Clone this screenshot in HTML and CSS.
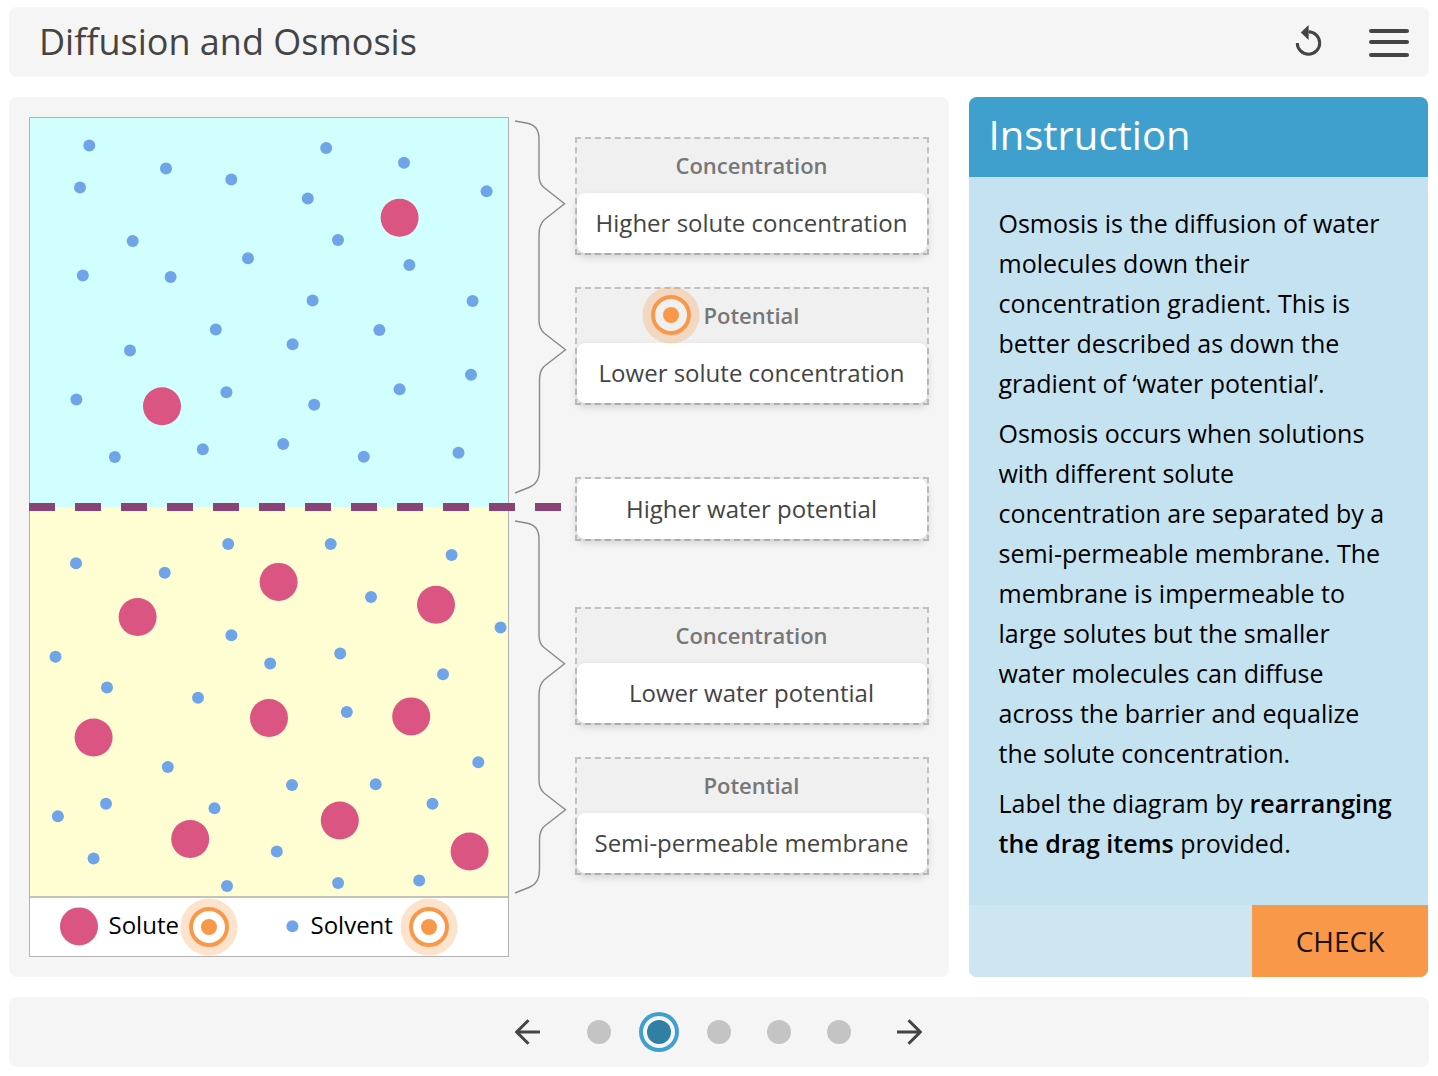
FILE: index.html
```html
<!DOCTYPE html>
<html lang="en">
<head>
    <meta charset="UTF-8">
    <meta name="viewport" content="width=device-width, initial-scale=1.0">
    <title>Diffusion and Osmosis</title>
    <link rel="stylesheet" href="styles.css">
</head>
<body>
    <header class="header">
        <h1 class="title">Diffusion and Osmosis</h1>
        <button class="icon-button reset" aria-label="Reset">
            <svg width="40" height="40" viewBox="0 0 40 40">
                <path d="M9.3 23A11.200 11.200 0 1 0 20.500 11.800" fill="none" stroke="#444" stroke-width="3"/>
                <path d="M20.600 5v15L12.800 12.400z" fill="#444"/>
            </svg>
        </button>
        <button class="icon-button menu" aria-label="Menu">
            <svg width="40" height="28" viewBox="0 0 40 28">
                <rect width="40" height="4" rx="2" fill="#444"/>
                <rect y="11" width="40" height="4" rx="2" fill="#444"/>
                <rect y="24" width="40" height="4" rx="2" fill="#444"/>
            </svg>
        </button>
    </header>

    <main class="main">
        <section class="activity">
            <svg class="diagram" width="546" height="840" viewBox="29 117 546 840">
                <rect x="29" y="117" width="480" height="390" fill="#d0fffe"/>
                <rect x="29" y="507" width="480" height="390" fill="#fffed2"/>
                <rect x="29" y="897" width="480" height="60" fill="#fff"/>
                <path d="M29 897h480" stroke="#c4c4b4" stroke-width="2"/>
                <rect x="29.5" y="117.5" width="479" height="839" fill="none" stroke="#b2b2b2"/>
                <path d="M29 507h532" stroke="#8a4374" stroke-width="8" stroke-dasharray="26 20"/>
                <g id="solvent" fill="#6fa5e8"></g>
                <g id="solute" fill="#da5581"></g>

                <g class="brace">
                    <path d="M515 121l12.500 2.200Q539 125.500 539 139V175Q539 183.500 544 187.500L564.500 203.700L544 220Q539 225 539 235V320Q539 328.500 544 333L565.500 349.700L544 366.500Q539.500 371 539.500 380V470Q539.500 483 530 487L515 493"/>
                    <path d="M515 521l12.500 2.200Q539 525.500 539 539V635Q539 643.500 544 647.500L564.500 663.700L544 680Q539 685 539 695V780Q539 788.500 544 793L565.500 809.700L544 826.500Q539.500 831 539.500 840V870Q539.500 883 530 887L515 893"/>
                </g>

                <text class="legend" x="108.500" y="934">Solute</text>
                <text class="legend" x="310.500" y="934">Solvent</text>
                <g class="hotspot-mark" transform="translate(209 927)">
                    <circle class="halo" r="28.500"/>
                    <circle r="20" fill="#fff"/>
                    <circle class="ring" r="18"/>
                    <circle class="dot" r="8"/>
                </g>
                <g class="hotspot-mark" transform="translate(429 927)">
                    <circle class="halo" r="28.500"/>
                    <circle r="20" fill="#fff"/>
                    <circle class="ring" r="18"/>
                    <circle class="dot" r="8"/>
                </g>
            </svg>

            <div class="slots">
                <div class="slot">
                    <div class="slot-title">Concentration</div>
                    <div class="drag-item">Higher solute concentration</div>
                </div>
                <div class="slot">
                    <div class="slot-title">Potential</div>
                    <div class="drag-item">Lower solute concentration</div>
                    <svg class="hotspot hotspot-mark" width="58" height="58" viewBox="-29 -29 58 58">
                        <circle class="halo" r="28.500"/>
                        <circle r="20" fill="#f0f0f0"/>
                        <circle class="ring" r="18"/>
                        <circle class="dot" r="8"/>
                    </svg>
                </div>
                <div class="slot membrane">
                    <div class="drag-item">Higher water potential</div>
                </div>
                <div class="slot">
                    <div class="slot-title">Concentration</div>
                    <div class="drag-item">Lower water potential</div>
                </div>
                <div class="slot">
                    <div class="slot-title">Potential</div>
                    <div class="drag-item">Semi-permeable membrane</div>
                </div>
            </div>
        </section>

        <aside class="instruction">
            <h2 class="instruction-title">Instruction</h2>
            <div class="instruction-text">
                <p>Osmosis is the diffusion of water molecules down their concentration gradient. This is better described as down the gradient of ‘water potential’.</p>
                <p>Osmosis occurs when solutions with different solute concentration are separated by a semi-permeable membrane. The membrane is impermeable to large solutes but the smaller water molecules can diffuse across the barrier and equalize the solute concentration.</p>
                <p>Label the diagram by <b>rearranging the drag items</b> provided.</p>
            </div>
            <div class="instruction-footer">
                <button class="check">CHECK</button>
            </div>
        </aside>
    </main>

    <nav class="pager">
        <button class="icon-button arrow" aria-label="Previous">
            <svg width="26" height="26" viewBox="0 0 26 26"><path d="M25 13H2M13.500 1.200L1.700 13l11.800 11.800"/></svg>
        </button>
        <span class="page"></span>
        <span class="page active"></span>
        <span class="page"></span>
        <span class="page"></span>
        <span class="page"></span>
        <button class="icon-button arrow" aria-label="Next">
            <svg width="26" height="26" viewBox="0 0 26 26"><path d="M1 13h23M12.500 1.200L24.300 13l-11.800 11.800"/></svg>
        </button>
    </nav>

    <script src="script.js"></script>
</body>
</html>
```
FILE: styles.css
```css
* {
    box-sizing: border-box;
}

body {
    font-family: "Open Sans", sans-serif;
    background-color: #ffffff;
    color: #444444;
    margin: 0;
    padding: 7px 9px 9px;
    height: 1076px;
    display: flex;
    flex-direction: column;
    gap: 20px;
}

.header {
    height: 70px;
    background-color: #f5f5f5;
    border-radius: 8px;
    display: flex;
    align-items: center;
    padding: 0 20px 0 30px;
}

.title {
    flex: 1;
    margin: 0;
    font-size: 36px;
    font-weight: 400;
    line-height: 70px;
}

.icon-button {
    display: flex;
    background: none;
    border: none;
    padding: 0;
    cursor: pointer;
}

.reset {
    margin: 0 41px 4px 0;
}

.menu {
    margin-top: 2px;
}

.main {
    height: 880px;
    display: flex;
    gap: 20px;
}

.activity {
    width: 940px;
    background-color: #f5f5f5;
    border-radius: 8px;
    padding: 20px;
    display: flex;
}

.diagram {
    display: block;
    flex: none;
}

.brace {
    fill: none;
    stroke: #8a8a8a;
    stroke-width: 1.4;
}

.legend {
    font-size: 24px;
    fill: #000000;
}

.halo {
    fill: #f99849;
    opacity: 0.28;
}

.ring {
    fill: none;
    stroke: #f99849;
    stroke-width: 4;
}

.dot {
    fill: #f99849;
}

.slots {
    width: 354px;
    padding-top: 20px;
    display: flex;
    flex-direction: column;
    gap: 32px;
}

.slot {
    position: relative;
    border: 2px dashed #c1c1c1;
    background-color: #f0f0f0;
}

.slot.membrane {
    margin: 40px 0 34px;
}

.slot-title {
    height: 54px;
    padding-right: 1px;
    line-height: 52px;
    text-align: center;
    font-size: 22px;
    font-weight: 600;
    color: #777777;
}

.drag-item {
    height: 60px;
    padding-right: 1px;
    line-height: 60px;
    text-align: center;
    font-size: 24px;
    background-color: #ffffff;
    border-radius: 8px;
    box-shadow: 0 4px 8px rgba(0, 0, 0, 0.15);
}

.hotspot {
    position: absolute;
    left: 65px;
    top: -3px;
}

.instruction {
    width: 459px;
    background-color: #c5e2f0;
    border-radius: 8px;
    overflow: hidden;
    display: flex;
    flex-direction: column;
}

.instruction-title {
    height: 80px;
    margin: 0;
    padding-left: 19.5px;
    background-color: #40a0cd;
    color: #ffffff;
    font-size: 40px;
    font-weight: 400;
    line-height: 76px;
}

.instruction-text {
    flex: 1;
    padding: 26px 30px 0 29.5px;
    color: #000000;
    font-size: 25px;
    line-height: 40px;
}

.instruction-text p {
    margin: 0 0 10px;
}

.instruction-text b {
    font-weight: 600;
}

.instruction-footer {
    height: 72px;
    background-color: #cde6f2;
    display: flex;
    justify-content: flex-end;
}

.check {
    width: 176px;
    border: none;
    background-color: #f99849;
    color: #1c1206;
    font-family: inherit;
    font-size: 28px;
    cursor: pointer;
}

.pager {
    height: 70px;
    background-color: #f5f5f5;
    border-radius: 8px;
    display: flex;
    justify-content: center;
    align-items: center;
    gap: 36px;
}

.arrow {
    margin: 0 10px 0 9px;
}

.arrow:last-child {
    margin: 0 10px 0 9px;
}

.arrow path {
    fill: none;
    stroke: #444444;
    stroke-width: 3;
}

.page {
    width: 24px;
    height: 24px;
    border-radius: 50%;
    background-color: #c4c4c4;
}

.page.active {
    background-color: #3180a4;
    box-shadow: 0 0 0 4px #f5f5f5, 0 0 0 8px #40a0cd;
}
```
FILE: script.js
```javascript
const solvent = [
    [89.3, 145.4], [80, 187.6], [166, 168.5], [231.3, 179.6], [326.2, 148], [404, 162.7], [486.6, 191.3], [307.8, 198.4],
    [132.7, 240.9], [82.8, 275.4], [170.6, 276.9], [248, 258.2], [338, 240], [409.4, 265], [472.6, 301], [312.6, 300.4],
    [215.8, 329.5], [292.6, 344.2], [379.4, 330], [130, 350.4], [76.4, 399.4], [226.4, 392.2], [314.2, 404.8], [399.6, 389.2],
    [471, 374.7], [202.8, 449.2], [114.8, 457], [283.2, 444], [363.8, 456.8], [458.5, 452.8],
    [76, 563.2], [164.7, 572.8], [228.2, 544], [330.7, 544], [451.6, 555], [371, 596.9], [500.6, 627.5], [231.4, 635.2],
    [55.5, 656.8], [107, 687.5], [270.2, 663.4], [340.2, 653.6], [443, 674.2], [198, 697.8], [346.8, 711.9],
    [167.8, 767], [106, 803.7], [57.9, 816.2], [93.6, 858.4], [214.5, 808.3], [292, 784.9], [375.7, 784.2], [432.5, 803.7],
    [478.3, 762.2], [276.8, 851.4], [227, 886], [338.1, 883], [419.2, 880.6], [292.4, 926.3]
];

const solute = [
    [399.6, 217.7], [162, 406.3], [278.6, 581.9], [137.6, 617], [436, 604.7], [93.6, 737.5], [269, 718], [411.2, 716.4],
    [190.2, 839], [339.8, 820.5], [469.6, 851.5], [79, 926.4]
];

function drawMolecules(id, points, radius) {
    const group = document.getElementById(id);
    points.forEach(([x, y]) => {
        const circle = document.createElementNS('http://www.w3.org/2000/svg', 'circle');
        circle.setAttribute('cx', x);
        circle.setAttribute('cy', y);
        circle.setAttribute('r', radius);
        group.appendChild(circle);
    });
}

drawMolecules('solvent', solvent, 6);
drawMolecules('solute', solute, 19);
```
